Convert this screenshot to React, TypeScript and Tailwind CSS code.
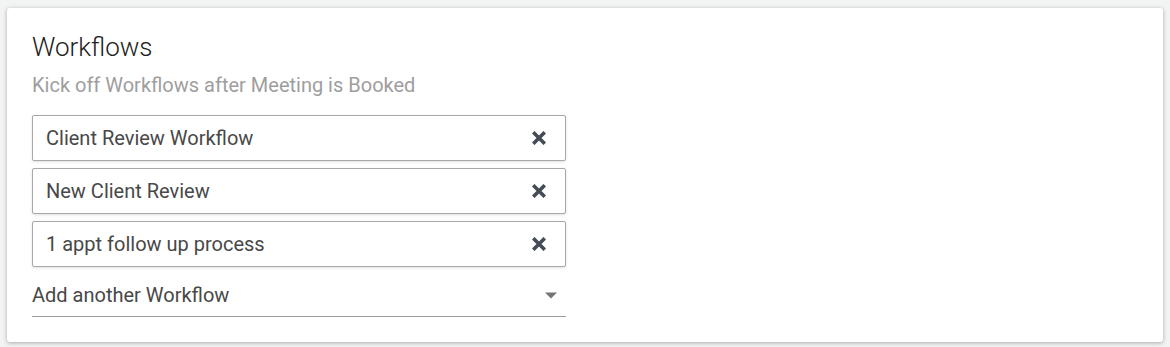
const workflows = ["Client Review Workflow", "New Client Review", "1 appt follow up process"];

function CloseIcon() {
  return (
    <svg width="14" height="14" viewBox="0 0 14 14">
      <path d="M2.5 2.5l9 9M11.5 2.5l-9 9" stroke="#454c55" strokeWidth="3.6" strokeLinecap="square" />
    </svg>
  );
}

export default function App() {
  return (
    <div className="min-h-[347px] bg-[#f2f3f3] pt-[8px] px-[7px] font-['Roboto',sans-serif]">
      <div className="h-[334px] w-[1156px] rounded-[3px] bg-white px-[25px] pt-[23px] shadow-[0_1px_4px_rgba(0,0,0,0.3)]">
        {/* Header */}
        <h2 className="text-[26px] font-light leading-[32px] text-[#212121]">Workflows</h2>
        <p className="mt-[10px] text-[20px] leading-[24px] text-[#9e9e9e]">
          Kick off Workflows after Meeting is Booked
        </p>

        {/* Selected workflows */}
        <div className="mt-[18px] flex w-[534px] flex-col gap-[7px]">
          {workflows.map((name) => (
            <div
              key={name}
              className="flex h-[46px] items-center justify-between rounded-[2px] border border-[#a8a8a8] bg-white pl-[13px] pr-[19px] shadow-[0_1px_3px_rgba(0,0,0,0.12)]"
            >
              <span className="text-[20px] text-[#484848]">{name}</span>
              <CloseIcon />
            </div>
          ))}
        </div>

        {/* Add dropdown */}
        <div className="mt-[7px] flex h-[43px] w-[534px] items-center justify-between border-b border-[#9e9e9e] pb-[1px]">
          <span className="text-[20px] text-[#484848]">Add another Workflow</span>
          <svg width="24" height="24" viewBox="0 0 24 24" className="mr-[3px] mt-[1px]">
            <path d="M6 9.5l6 6 6-6z" fill="#757575" />
          </svg>
        </div>
      </div>
    </div>
  );
}
